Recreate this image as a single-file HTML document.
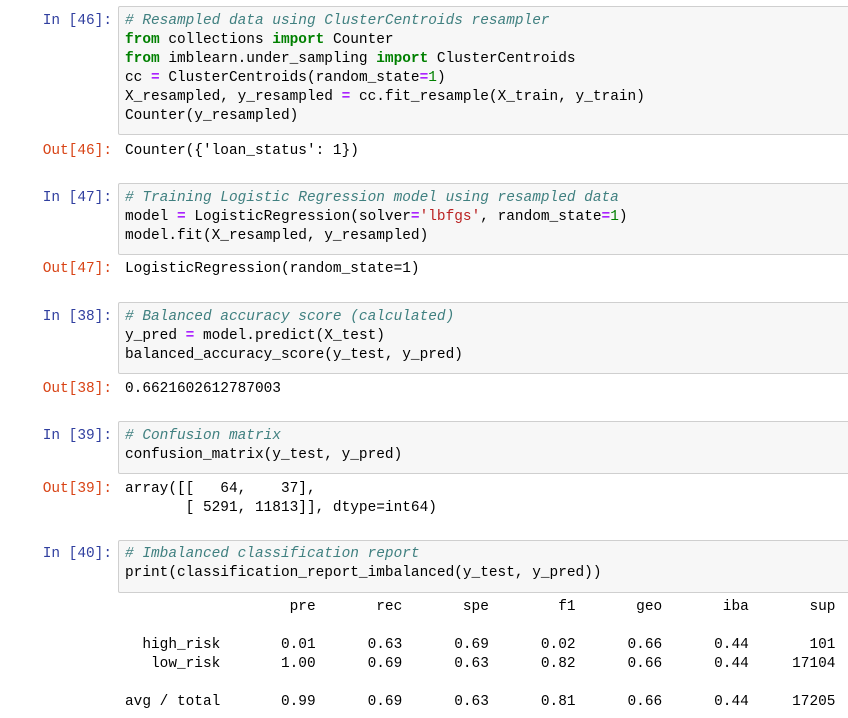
<!DOCTYPE html>
<html><head><meta charset="utf-8"><style>
body{margin:0;width:848px;height:718px;background:#fff;position:relative;overflow:hidden;font-family:"Liberation Mono",monospace;font-size:14.45px;}
.p{position:absolute;right:736px;line-height:19px;white-space:pre;}
.in{color:#303F9F}.out{color:#D84315}
.box{position:absolute;left:118px;width:740px;background:#f7f7f7;border:1px solid #cfcfcf;border-radius:2px;}
.t{position:absolute;left:125px;white-space:pre;color:#000;margin:0;font:inherit;line-height:19px;}
.k{color:#008000;font-weight:bold}.o{color:#AA22FF;font-weight:bold}.c{color:#408080;font-style:italic}.s{color:#BA2121}.n{color:#008000}
</style></head><body>
<div class="box" style="top:6px;height:127px"></div>
<div class="p in" style="top:12px">In [46]:</div>
<pre class="t" style="top:12px"><span class="c"># Resampled data using ClusterCentroids resampler</span>
<span class="k">from</span> collections <span class="k">import</span> Counter
<span class="k">from</span> imblearn.under_sampling <span class="k">import</span> ClusterCentroids
cc <span class="o">=</span> ClusterCentroids(random_state<span class="o">=</span><span class="n">1</span>)
X_resampled, y_resampled <span class="o">=</span> cc.fit_resample(X_train, y_train)
Counter(y_resampled)</pre>
<div class="p out" style="top:142px">Out[46]:</div>
<pre class="t" style="top:142px">Counter({'loan_status': 1})</pre>

<div class="box" style="top:183px;height:70px"></div>
<div class="p in" style="top:189px">In [47]:</div>
<pre class="t" style="top:189px"><span class="c"># Training Logistic Regression model using resampled data</span>
model <span class="o">=</span> LogisticRegression(solver<span class="o">=</span><span class="s">'lbfgs'</span>, random_state<span class="o">=</span><span class="n">1</span>)
model.fit(X_resampled, y_resampled)</pre>
<div class="p out" style="top:260px">Out[47]:</div>
<pre class="t" style="top:260px">LogisticRegression(random_state=1)</pre>

<div class="box" style="top:302px;height:70px"></div>
<div class="p in" style="top:308px">In [38]:</div>
<pre class="t" style="top:308px"><span class="c"># Balanced accuracy score (calculated)</span>
y_pred <span class="o">=</span> model.predict(X_test)
balanced_accuracy_score(y_test, y_pred)</pre>
<div class="p out" style="top:380px">Out[38]:</div>
<pre class="t" style="top:380px">0.6621602612787003</pre>

<div class="box" style="top:421px;height:51px"></div>
<div class="p in" style="top:427px">In [39]:</div>
<pre class="t" style="top:427px"><span class="c"># Confusion matrix</span>
confusion_matrix(y_test, y_pred)</pre>
<div class="p out" style="top:480px">Out[39]:</div>
<pre class="t" style="top:480px">array([[   64,    37],
       [ 5291, 11813]], dtype=int64)</pre>

<div class="box" style="top:540px;height:51px"></div>
<div class="p in" style="top:545px">In [40]:</div>
<pre class="t" style="top:545px"><span class="c"># Imbalanced classification report</span>
print(classification_report_imbalanced(y_test, y_pred))</pre>
<pre class="t" style="top:598px">                   pre       rec       spe        f1       geo       iba       sup

  high_risk       0.01      0.63      0.69      0.02      0.66      0.44       101
   low_risk       1.00      0.69      0.63      0.82      0.66      0.44     17104

avg / total       0.99      0.69      0.63      0.81      0.66      0.44     17205</pre>
</body></html>
